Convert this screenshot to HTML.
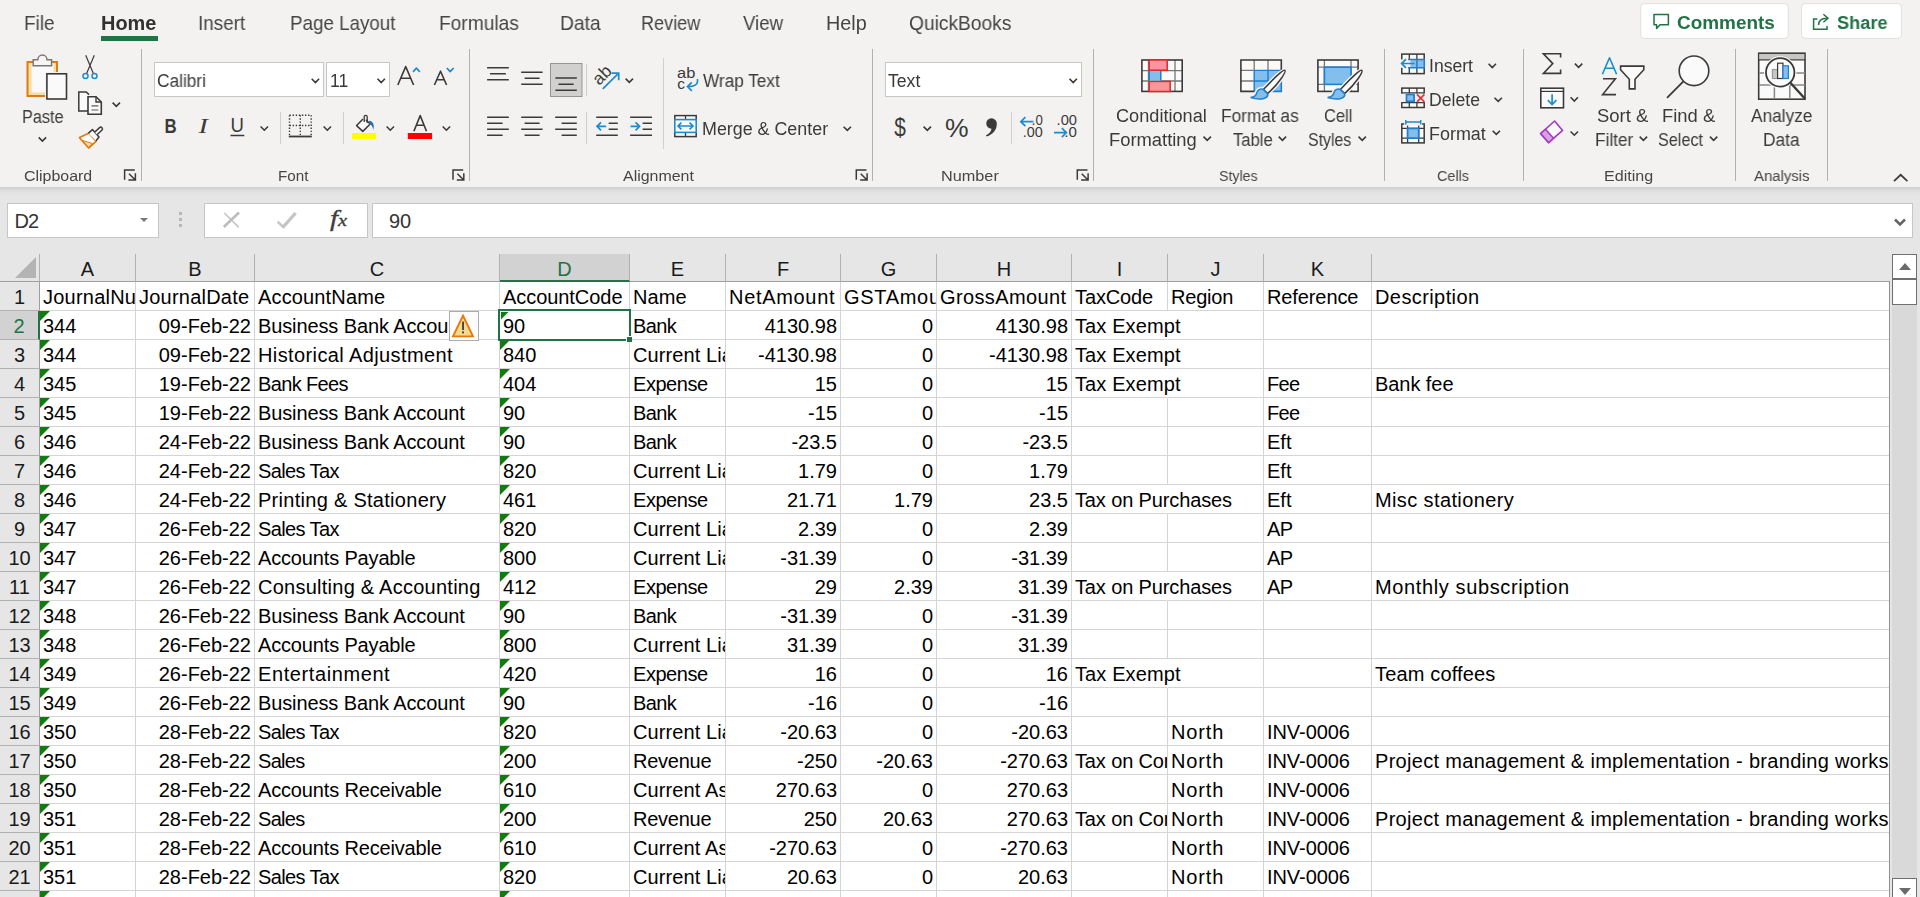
<!DOCTYPE html>
<html><head><meta charset="utf-8"><title>Excel</title>
<style>
*{box-sizing:border-box;margin:0;padding:0}
html,body{width:1920px;height:897px;overflow:hidden;background:#e6e6e6;font-family:"Liberation Sans",sans-serif;color:#000}
.abs,.abs>*{position:absolute}
#ribbon{position:absolute;left:0;top:0;width:1920px;height:187px;background:#f3f2f1}
#shadow{position:absolute;left:0;top:187px;width:1920px;height:9px;background:linear-gradient(#cfcfcf,#e0e0e0 50%,#e6e6e6)}
.tab{position:absolute;top:11px;font-size:19px;color:#3b3a39;white-space:nowrap;line-height:24px}
.rt{position:absolute;display:inline-block;white-space:nowrap;line-height:24px;transform-origin:0 0;will-change:transform}
.lbl{position:absolute;font-size:18px;color:#3b3a39;white-space:nowrap;line-height:22px}
.glbl{position:absolute;font-size:15.5px;color:#484644;white-space:nowrap;line-height:18px;top:166px}
.sep{position:absolute;top:49px;width:1px;height:132px;background:#b3b0ad}
.ssep{position:absolute;width:1px;background:#d2d0ce}
svg{position:absolute;overflow:visible}
.chev{position:absolute;width:10px;height:6px}
.box{position:absolute;background:#fff;border:1px solid #c8c6c4}
/* formula bar */
#fbar{position:absolute;left:0;top:196px;width:1920px;height:58px;background:#e6e6e6}
/* grid */
#grid{position:absolute;left:0;top:254px;width:1889px;height:643px;background:#fff;overflow:hidden}
.ch{position:absolute;top:0;height:28px;background:#e6e6e6;border-right:1px solid #b1b1b1;border-bottom:1px solid #9e9e9e;text-align:center;font-size:20px;line-height:29px;padding-top:1px;color:#1a1a1a}
.rh{position:absolute;left:0;width:40px;height:29px;background:#e6e6e6;border-right:1px solid #9e9e9e;border-bottom:1px solid #b1b1b1;text-align:center;font-size:20px;line-height:29px;padding-top:1px;color:#1a1a1a}
.c{position:absolute;height:29px;border-right:1px solid #d4d4d4;border-bottom:1px solid #d4d4d4;font-size:20px;line-height:29px;padding:1px 3px 0 3px;white-space:nowrap;overflow:hidden}
.c.r{text-align:right}
.c.o{overflow:visible;border-right-color:transparent}
.c.t:before{content:"";position:absolute;left:0;top:0;width:10px;height:10px;background:#107c10;clip-path:polygon(0 0,100% 0,0 100%)}
</style></head><body>
<style>
.ch.sel{background:#d2d2d2;color:#217346;border-bottom:2px solid #217346}
.rh.sel{background:#d2d2d2;color:#217346;border-right:2px solid #217346}
.warn{position:absolute;left:449px;top:57px;width:30px;height:30px;background:#fdfdfd;border:1px solid #ababab}
.c.t.s2:before{left:1px;top:1px;width:7.5px;height:7.5px}
.selbox{position:absolute;left:498px;top:55px;width:133px;height:32px;border:2px solid #217346}
.selh{position:absolute;left:626px;top:82px;width:5px;height:5px;background:#217346;border:1px solid #fff;box-sizing:content-box;border-right:0;border-bottom:0}
/* scrollbar */
#vs{position:absolute;left:1889px;top:254px;width:31px;height:643px;background:#e6e6e6}
#vs .track{position:absolute;left:3px;top:0;width:25px;height:643px;background:#d9d9d9}
#vs .btn{position:absolute;left:3px;width:25px;background:#fff;border:1px solid #707070}
</style>
<div id="ribbon">
<div style="position:absolute;left:101px;top:36.2px;width:56.7px;height:4.6px;background:#217346"></div>
<div class="box" style="left:153.5px;top:62px;width:170.5px;height:35px"></div>
<div class="box" style="left:326px;top:62px;width:64px;height:35px"></div>
<div class="box" style="left:885px;top:62px;width:197px;height:35px"></div>
<div class="sep" style="left:141px"></div>
<div class="sep" style="left:469px"></div>
<div class="sep" style="left:872px"></div>
<div class="sep" style="left:1093px"></div>
<div class="sep" style="left:1384px"></div>
<div class="sep" style="left:1523px"></div>
<div class="sep" style="left:1735px"></div>
<div class="sep" style="left:1827px"></div>
<div class="ssep" style="left:663px;top:58px;height:91px"></div>
<div class="ssep" style="left:280px;top:112px;height:32px"></div>
<div class="ssep" style="left:343px;top:112px;height:32px"></div>
<div class="ssep" style="left:586px;top:112px;height:32px"></div>
<div class="ssep" style="left:1011px;top:112px;height:32px"></div>
<div class="ssep" style="left:586px;top:64px;height:32px"></div>
<svg width="1920" height="187" viewBox="0 0 1920 187" style="left:0;top:0">
<!-- Clipboard group -->
<g fill="none" stroke-linecap="butt">
<!-- paste -->
<rect x="27.5" y="62" width="29.5" height="34" fill="#fbdca3" stroke="#de7b12" stroke-width="2"/>
<rect x="31.5" y="63" width="22" height="29.5" fill="#fafafa"/>
<path d="M33.2 65.8V59.7H37.8A4.6 4.6 0 0 1 47 59.7H51.6V65.8Z" fill="#f6f5f4" stroke="#797775" stroke-width="1.5"/>
<rect x="45" y="72" width="23.2" height="28.8" fill="#f3f2f1"/>
<rect x="46.9" y="73.8" width="19.6" height="25.2" fill="#fafafa" stroke="#3b3a39" stroke-width="1.6"/>
<!-- scissors -->
<path d="M94.3 55.3L86.6 73.6M85.7 55.3L93.4 73.6" stroke="#3b3a39" stroke-width="1.2"/>
<circle cx="85.5" cy="76" r="2.5" stroke="#1e8bcd" stroke-width="1.5"/>
<circle cx="94.5" cy="76" r="2.5" stroke="#1e8bcd" stroke-width="1.5"/>
<!-- copy -->
<path d="M88 111H78.8V91.9H86.2L89 94.6" stroke="#3b3a39" stroke-width="1.5" fill="#fafafa"/>
<path d="M88 96.7H96L101.3 102V114.2H88Z" fill="#fafafa" stroke="#3b3a39" stroke-width="1.6"/>
<path d="M96 96.7V102H101.3" stroke="#3b3a39" stroke-width="1.4"/>
<path d="M91.4 105.9H98.4M91.4 110H98.4" stroke="#605e5c" stroke-width="1.2"/>
<!-- format painter -->
<path d="M79.5 137.6L88.6 133.2L96.2 141.2L88.6 148L79.5 137.6Z" fill="#fff" stroke="#de7b12" stroke-width="1.7" stroke-linejoin="round"/>
<path d="M82.5 140.5L92.5 143.5L88.6 147.2Z" fill="#fbdca3" stroke="#de7b12" stroke-width="1"/>
<path d="M88.3 133.4L92.4 129.6L99 137L96 140.8" fill="#fafafa" stroke="#3b3a39" stroke-width="1.5" stroke-linejoin="round"/>
<path d="M94.6 132.2L99.6 127.6A1.7 1.7 0 0 1 102 130L97 134.8" fill="#fafafa" stroke="#3b3a39" stroke-width="1.5"/>
</g>

<!-- Font group -->
<g fill="none" stroke="#3b3a39" stroke-width="1.6" stroke-linejoin="round">
<path d="M397.8 85L405.7 66.6L413.6 85M400.6 78.3H410.8"/>
<path d="M413 71.8L416.4 68.2L419.8 71.8" stroke="#1e8bcd" stroke-width="1.7"/>
<path d="M434.4 85L440.5 71.2L446.6 85M436.6 79.8H444.4"/>
<path d="M446.8 68L450.2 71.6L453.6 68" stroke="#1e8bcd" stroke-width="1.7"/>
<path d="M230.5 135.5H244.3" stroke-width="1.5"/>
<!-- borders -->
<g stroke-width="1.4" stroke-dasharray="1.4 1.7">
<path d="M289.5 115.2H311.2M289.5 125.5H311.2M289.5 115.2V135M300.3 115.2V135M311.2 115.2V135"/>
</g>
<path d="M288.8 136.5H311.8" stroke-width="1.8"/>
<!-- fill bucket -->
<path d="M363 119L356.6 125.6L362.8 131.4L370.2 124L365.8 119.8" stroke-width="1.5" fill="#fafafa" stroke-linejoin="round"/>
<path d="M364.2 122V116.8A1.5 1.5 0 0 1 367.2 116.8V123" stroke-width="1.3"/>
<path d="M369 120.8C372.6 121 375 124.6 373.2 130C372.8 126.6 371.6 124.6 369.4 123.4Z" fill="#1e6fb8" stroke="none"/>
<!-- font color A -->
<path d="M413.9 131.3L420.2 115.6L426.5 131.3M416.2 125.3H424.2"/>
</g>
<rect x="352" y="133" width="24.3" height="6" fill="#ffff00"/>
<rect x="407.8" y="133" width="24.3" height="6" fill="#ff0000"/>
<g fill="#3b3a39" font-family="Liberation Sans, sans-serif">
<text x="164.4" y="132.6" font-size="20" font-weight="bold" textLength="12.2" lengthAdjust="spacingAndGlyphs">B</text>
<text x="198.6" y="132.6" font-size="21.5" font-style="italic" font-family="Liberation Serif, serif" textLength="9.4" lengthAdjust="spacingAndGlyphs">I</text>
<text x="230.6" y="132.3" font-size="19.5" textLength="13.4" lengthAdjust="spacingAndGlyphs">U</text>
</g>
<!-- Alignment group -->
<rect x="550.5" y="63.5" width="31.5" height="33" fill="#d2d0ce" stroke="#979593" stroke-width="1"/>
<g fill="none" stroke="#3b3a39" stroke-width="1.6">
<path d="M487.1 67.7H508.8M490 73.8H505.9M487.1 79.8H508.8"/>
<path d="M521.2 72.2H542.6M524.6 78.2H539.6M521.2 84.2H542.6"/>
<path d="M555.4 78H576.8M558.5 84.2H573.7M555.4 90.2H576.8"/>
<path d="M487.1 117.2H508.8M487.1 123.3H502.6M487.1 129.3H508.8M487.1 135.3H502.6"/>
<path d="M521.2 117.2H542.6M524.6 123.3H539.6M521.2 129.3H542.6M524.6 135.3H539.6"/>
<path d="M555.2 117.2H576.8M561.6 123.3H576.8M555.2 129.3H576.8M561.6 135.3H576.8"/>
<path d="M596.2 117.2H617.8M608.7 123.3H617.8M608.7 129.3H617.8M596.2 135.3H617.8"/>
<path d="M630.1 117.2H652M642.6 123.3H652M642.6 129.3H652M630.1 135.3H652"/>
<g stroke="#1e8bcd" stroke-width="1.7">
<path d="M597.2 126.3H606.2M601 122.3L597 126.3L601 130.3"/>
<path d="M630.5 126.3H639.5M635.6 122.3L639.6 126.3L635.6 130.3"/>
<path d="M602.8 88.9L618.2 73.7M611.6 73.2H618.7V80.3"/>
<path d="M697.4 79C698.4 84.6 694.6 86.6 687.8 86.6M691.8 82.3L687.5 86.6L691.8 90.9"/>
</g>
<!-- merge -->
<rect x="674.8" y="115.6" width="21.4" height="21" fill="#fafafa" stroke-width="1.5"/>
<path d="M685.5 115.6V137" stroke-width="1.3"/>
<rect x="674.8" y="119.6" width="21.4" height="12.8" fill="#fafafa" stroke="#1e8bcd" stroke-width="1.6"/>
<path d="M678 126H693M681.4 122.6L678 126L681.4 129.4M689.6 122.6L693 126L689.6 129.4" stroke="#1e8bcd" stroke-width="1.6"/>
</g>
<g fill="#3b3a39" font-family="Liberation Sans, sans-serif">
<text transform="translate(599.2,86) rotate(-45)" font-size="17.5">ab</text>
<text x="677" y="77.8" font-size="15.5" textLength="18.3" lengthAdjust="spacingAndGlyphs">ab</text>
<text x="677.2" y="89.3" font-size="15.5">c</text>
<!-- Number group -->
<text transform="translate(894.2,135.6) scale(1,1.32)" font-size="20" textLength="11.6" lengthAdjust="spacingAndGlyphs">$</text>
<text x="945" y="136.8" font-size="26.5" textLength="23.6" lengthAdjust="spacingAndGlyphs">%</text>
<path d="M991.4 118.3A5.2 5.2 0 0 1 996.8 123.9C996.8 129.8 992.8 134.4 986.6 136.6L986 135.3C989.2 133.7 991.2 131.5 991.5 128.7A5.2 5.2 0 0 1 991.4 118.3Z"/>
<text x="1035.6" y="125.1" font-size="14.3" textLength="7.4" lengthAdjust="spacingAndGlyphs">0</text>
<text x="1031.4" y="125.1" font-size="14.3">.</text>
<text x="1022.8" y="137.4" font-size="14.3" textLength="20" lengthAdjust="spacingAndGlyphs">.00</text>
<text x="1056.6" y="125.1" font-size="14.3" textLength="20.4" lengthAdjust="spacingAndGlyphs">.00</text>
<text x="1064.2" y="137.4" font-size="14.3" textLength="12.6" lengthAdjust="spacingAndGlyphs">.0</text>
</g>
<g fill="none" stroke="#1e8bcd" stroke-width="1.7">
<path d="M1020.8 121.7H1033.4M1025.4 117.2L1020.8 121.7L1025.4 126.2"/>
<path d="M1054 132.6H1066.4M1061.8 128.1L1066.4 132.6L1061.8 137.1"/>
</g>

<!-- Styles group -->
<g fill="none" stroke="#3b3a39" stroke-width="1.6">
<!-- conditional formatting -->
<rect x="1141.9" y="60" width="40.3" height="31.4" fill="#fafafa" stroke="none"/>
<path d="M1148.5 60V91.4M1175 60V91.4M1142 70.6H1182M1142 81H1182" stroke="#797775" stroke-width="1.3"/>
<rect x="1141.9" y="60" width="40.3" height="31.4"/>
<rect x="1149.2" y="60" width="18" height="10.2" fill="#f8959d" stroke="#d92c2c" stroke-width="1.5"/>
<rect x="1149.2" y="81.4" width="21" height="10.1" fill="#f8959d" stroke="#d92c2c" stroke-width="1.5"/>
<rect x="1149.2" y="71" width="11.6" height="9.6" fill="#83beec" stroke="none"/>
<path d="M1149.2 71V80.6M1160.8 71V80.6" stroke="#1e7fd0" stroke-width="1.5"/>
<!-- format as table -->
<rect x="1240.9" y="60" width="40.4" height="31.4" fill="#fafafa" stroke="none"/>
<rect x="1254.2" y="70.4" width="27.1" height="21" fill="#83beec" stroke="none"/>
<path d="M1254.2 60V70.4M1268 60V70.4M1241 70.4H1254.2M1241 81H1254.2" stroke="#797775" stroke-width="1.3"/>
<path d="M1254.2 70.4V91.4M1268 70.4V91.4M1254.2 70.4H1281.3M1254.2 81H1281.3" stroke="#1e7fd0" stroke-width="1.4"/>
<path d="M1254.2 91.4H1240.9V60H1281.3V70.4"/>
<path d="M1281.3 70.4V91.4H1254.2" stroke="#1e7fd0"/>
<g>
<path d="M1284.9 70.3C1286.2 71.6 1280 82.4 1267.6 93.6L1263.4 89.6C1274 78 1283.6 69.2 1284.9 70.3Z" stroke="#f3f2f1" stroke-width="4.5"/>
<path d="M1263.4 89.6L1267.6 93.6C1268.8 97.8 1262 101 1250.6 97.6C1255.4 97 1256.4 95 1257 92.4C1257.8 89.4 1261 88.4 1263.4 89.6Z" stroke="#f3f2f1" stroke-width="4.5"/>
<path d="M1284.9 70.3C1286.2 71.6 1280 82.4 1267.6 93.6L1263.4 89.6C1274 78 1283.6 69.2 1284.9 70.3Z" fill="#fafafa" stroke-width="1.5"/>
<path d="M1263.4 89.6L1267.6 93.6C1268.8 97.8 1262 101 1250.6 97.6C1255.4 97 1256.4 95 1257 92.4C1257.8 89.4 1261 88.4 1263.4 89.6Z" fill="#83beec" stroke="#1e7fd0" stroke-width="1.5"/>
</g>
<!-- cell styles -->
<rect x="1317.9" y="60" width="40.2" height="31.4" fill="#fafafa" stroke="none"/>
<path d="M1324.4 60V91.4M1351 60V91.4M1318 67.2H1358M1318 84.4H1358" stroke="#797775" stroke-width="1.3"/>
<rect x="1317.9" y="60" width="40.2" height="31.4"/>
<rect x="1324.4" y="67.2" width="26.6" height="17.2" fill="#83beec" stroke="#1e7fd0" stroke-width="1.6"/>
<g transform="translate(77,0)">
<path d="M1284.9 70.3C1286.2 71.6 1280 82.4 1267.6 93.6L1263.4 89.6C1274 78 1283.6 69.2 1284.9 70.3Z" stroke="#f3f2f1" stroke-width="4.5"/>
<path d="M1263.4 89.6L1267.6 93.6C1268.8 97.8 1262 101 1250.6 97.6C1255.4 97 1256.4 95 1257 92.4C1257.8 89.4 1261 88.4 1263.4 89.6Z" stroke="#f3f2f1" stroke-width="4.5"/>
<path d="M1284.9 70.3C1286.2 71.6 1280 82.4 1267.6 93.6L1263.4 89.6C1274 78 1283.6 69.2 1284.9 70.3Z" fill="#fafafa" stroke-width="1.5"/>
<path d="M1263.4 89.6L1267.6 93.6C1268.8 97.8 1262 101 1250.6 97.6C1255.4 97 1256.4 95 1257 92.4C1257.8 89.4 1261 88.4 1263.4 89.6Z" fill="#83beec" stroke="#1e7fd0" stroke-width="1.5"/>
</g>
</g>
<!-- Cells group -->
<g fill="none" stroke="#3b3a39" stroke-width="1.5">
<!-- insert -->
<rect x="1401.8" y="54.1" width="22.4" height="19.5" fill="#fafafa"/>
<path d="M1409.3 54.1V73.6M1416.9 54.1V73.6" stroke-width="1.3"/>
<rect x="1400" y="59.4" width="10.4" height="8.4" fill="#f3f2f1" stroke="none"/>
<rect x="1410.4" y="59.4" width="14.6" height="8.4" fill="#83beec" stroke="none"/>
<path d="M1408 59.4H1425M1408 67.8H1425M1416.9 59.4V67.8M1424.3 59.4V67.8" stroke="#1e7fd0" stroke-width="1.5"/>
<path d="M1401.6 63.5H1414.6M1406 59.2L1401.6 63.5L1406 67.8" stroke="#1e8bcd" stroke-width="1.7"/>
<!-- delete -->
<rect x="1401.8" y="88.1" width="22.4" height="19.4" fill="#fafafa"/>
<path d="M1409.3 88.1V107.5M1416.9 88.1V107.5" stroke-width="1.3"/>
<rect x="1400" y="93.5" width="26" height="8.6" fill="#f3f2f1" stroke="none"/>
<path d="M1401.8 92.8H1424.2M1401.8 102.6H1424.2" stroke-width="1.3"/>
<rect x="1406.5" y="94.5" width="7.6" height="6.8" fill="#83beec" stroke="#1e7fd0" stroke-width="1.7"/>
<path d="M1417 94.4L1424.4 101.8M1424.4 94.4L1417 101.8" stroke="#e8323a" stroke-width="1.7"/>
<!-- format -->
<rect x="1401.8" y="124" width="22.4" height="18.9" fill="#fafafa"/>
<path d="M1407.6 124V142.9M1418.7 124V142.9M1401.8 128.4H1424.2M1401.8 138.1H1424.2" stroke-width="1.3"/>
<rect x="1404.2" y="119.4" width="18" height="6.2" fill="#f3f2f1" stroke="none"/>
<rect x="1407.6" y="128.4" width="11.1" height="9.7" fill="#83beec" stroke="#1e7fd0" stroke-width="1.7"/>
<path d="M1405.8 122.1H1420.7M1405.8 119.9V124.4M1420.7 119.9V124.4" stroke="#1e8bcd" stroke-width="1.5"/>
</g>
<!-- Editing group -->
<g fill="none" stroke="#3b3a39" stroke-width="1.6">
<path d="M1560.6 57.6V53.8H1543.4L1552.8 63.6L1543.4 73.4H1560.6V69.6"/>
<rect x="1540.8" y="88.2" width="22.7" height="19.6" fill="#fafafa"/>
<path d="M1540.8 91.4H1563.5" stroke-width="1.2"/>
<path d="M1552.1 94.2V104.4M1547.8 100.2L1552.1 104.6L1556.4 100.2" stroke="#1e8bcd" stroke-width="1.7"/>
<path d="M1554.6 121L1562.6 130.4L1548.6 142.6L1540.6 133.6Z" fill="#fafafa" stroke="#a33bc2" stroke-width="1.6" stroke-linejoin="round"/>
<path d="M1545.5 129.2L1553.5 138.3L1548.6 142.6L1540.6 133.6Z" fill="#d9a0e6" stroke="#a33bc2" stroke-width="1.5" stroke-linejoin="round"/>
<path d="M1602.4 74.2L1609.5 57.8L1616.6 74.2M1605 68.3H1614" stroke="#1e8bcd" stroke-linejoin="round"/>
<path d="M1603 78.8H1615.4L1602.6 94.6H1616"/>
<path d="M1620.6 66.1H1643.8V69.8L1635 79.2V88.9H1629.3V79.2L1620.6 69.8Z" fill="#fafafa"/>
<circle cx="1694" cy="70.8" r="14.8" fill="#fafafa"/>
<path d="M1683.4 81.4L1667 97.8" stroke-width="1.8"/>
</g>
<!-- Analyze data -->
<g fill="none" stroke="#3b3a39" stroke-width="1.6">
<rect x="1758.7" y="53.2" width="46.3" height="46" fill="#fafafa"/>
<rect x="1759.5" y="54" width="44.7" height="5.4" fill="#c8c6c4" stroke="none"/>
<path d="M1758.7 59.8H1805" stroke-width="1.3"/>
<path d="M1774.4 60V99M1789.8 60V99M1759 73H1805M1759 84.9H1805" stroke="#8a8886" stroke-width="1.5"/>
<circle cx="1780.2" cy="72.4" r="16.2" fill="#fafafa" stroke="none"/>
<circle cx="1780.2" cy="72.4" r="14.2" fill="#fafafa" stroke-width="1.8"/>
<rect x="1772.4" y="69.6" width="5.2" height="8.9" fill="#c8c6c4" stroke="#979593" stroke-width="1.1"/>
<rect x="1777.6" y="63.2" width="5.4" height="15.3" fill="#fafafa" stroke-width="1.2"/>
<rect x="1783" y="65.8" width="5.4" height="12.7" fill="#83beec" stroke="#1e7fd0" stroke-width="1.2"/>
<path d="M1790.4 82.8L1805 98.8" stroke-width="2.4"/>
</g>
<!-- collapse ribbon -->
<path d="M1894 181.2L1900.7 174.8L1907.4 181.2" fill="none" stroke="#3b3a39" stroke-width="1.7"/>
<!-- Comments / Share -->
<rect x="1640.7" y="3.6" width="147.6" height="34.8" rx="3.5" fill="#fff" stroke="#e1dfdd"/>
<rect x="1801.6" y="3.6" width="99.8" height="34.8" rx="3.5" fill="#fff" stroke="#e1dfdd"/>
<path d="M1654 14.4H1668.4V24.8H1660L1656.6 28.4V24.8H1654Z" fill="none" stroke="#217346" stroke-width="1.5" stroke-linejoin="round"/>
<path d="M1817.4 19H1813.6V29.2H1827V26M1818.6 25C1818.6 20.4 1821.4 18.2 1826.6 18.2M1823.4 14.2L1828 18.2L1823.4 22.2" fill="none" stroke="#217346" stroke-width="1.5"/>

<path d="M38.7 137.4L42.4 141.1L46.1 137.4M112.6 102.6L116.3 106.3L120.0 102.6M311.7 78.8L315.4 82.5L319.1 78.8M377.5 78.8L381.2 82.5L384.9 78.8M260.6 126.5L264.3 130.2L268.0 126.5M323.6 126.5L327.3 130.2L331.0 126.5M386.6 126.5L390.3 130.2L394.0 126.5M442.7 126.5L446.4 130.2L450.1 126.5M625.6 78.6L629.3 82.3L633.0 78.6M843.6 126.7L847.3 130.4L851.0 126.7M1069.5 78.8L1073.2 82.5L1076.9 78.8M923.6 126.6L927.3 130.3L931.0 126.6M1203.5 136.6L1207.2 140.3L1210.9 136.6M1278.7 136.6L1282.4 140.3L1286.1 136.6M1358.5 136.6L1362.2 140.3L1365.9 136.6M1488.6 63.8L1492.3 67.5L1496.0 63.8M1494.5 97.7L1498.2 101.4L1501.9 97.7M1492.6 130.7L1496.3 134.4L1500.0 130.7M1574.9 63.6L1578.6 67.3L1582.3 63.6M1570.6 97.3L1574.3 101.0L1578.0 97.3M1570.6 131.5L1574.3 135.2L1578.0 131.5M1639.7 136.6L1643.4 140.3L1647.1 136.6M1709.9 136.6L1713.6 140.3L1717.3 136.6" fill="none" stroke="#3b3a39" stroke-width="1.6"/>
<path d="M124.6 179.8V170H134.8M129.0 173.8L135.4 180M135.4 173.2V180.1H128.4" fill="none" stroke="#3b3a39" stroke-width="1.5"/>
<path d="M453.0 179.8V170H463.2M457.4 173.8L463.8 180M463.8 173.2V180.1H456.8" fill="none" stroke="#3b3a39" stroke-width="1.5"/>
<path d="M856.3 179.8V170H866.5M860.7 173.8L867.1 180M867.1 173.2V180.1H860.1" fill="none" stroke="#3b3a39" stroke-width="1.5"/>
<path d="M1077.3 179.8V170H1087.5M1081.7 173.8L1088.1 180M1088.1 173.2V180.1H1081.1" fill="none" stroke="#3b3a39" stroke-width="1.5"/>
</svg>
<span class="rt" style="left:24.34px;top:11.36px;font-size:19.8px;font-weight:normal;color:#444;transform:scaleX(0.9620)">File</span>
<span class="rt" style="left:197.75px;top:11.36px;font-size:19.8px;font-weight:normal;color:#444;transform:scaleX(0.9515)">Insert</span>
<span class="rt" style="left:289.75px;top:11.36px;font-size:19.8px;font-weight:normal;color:#444;transform:scaleX(0.9495)">Page Layout</span>
<span class="rt" style="left:439.03px;top:11.36px;font-size:19.8px;font-weight:normal;color:#444;transform:scaleX(0.9688)">Formulas</span>
<span class="rt" style="left:560.03px;top:11.36px;font-size:19.8px;font-weight:normal;color:#444;transform:scaleX(0.9735)">Data</span>
<span class="rt" style="left:640.79px;top:11.36px;font-size:19.8px;font-weight:normal;color:#444;transform:scaleX(0.9137)">Review</span>
<span class="rt" style="left:743.30px;top:11.36px;font-size:19.8px;font-weight:normal;color:#444;transform:scaleX(0.9414)">View</span>
<span class="rt" style="left:825.71px;top:11.36px;font-size:19.8px;font-weight:normal;color:#444;transform:scaleX(0.9904)">Help</span>
<span class="rt" style="left:909.30px;top:11.36px;font-size:19.8px;font-weight:normal;color:#444;transform:scaleX(0.9692)">QuickBooks</span>
<span class="rt" style="left:100.69px;top:11.36px;font-size:19.8px;font-weight:bold;color:#323130;transform:scaleX(1.0064)">Home</span>
<span class="rt" style="left:22.08px;top:104.78px;font-size:17.6px;font-weight:normal;color:#3b3a39;transform:scaleX(0.9235)">Paste</span>
<span class="rt" style="left:157.40px;top:68.88px;font-size:17.6px;font-weight:normal;color:#3b3a39;transform:scaleX(0.9826)">Calibri</span>
<span class="rt" style="left:329.50px;top:68.88px;font-size:17.6px;font-weight:normal;color:#3b3a39;transform:scaleX(1.0013)">11</span>
<span class="rt" style="left:702.60px;top:68.98px;font-size:17.6px;font-weight:normal;color:#3b3a39;transform:scaleX(0.9774)">Wrap Text</span>
<span class="rt" style="left:701.78px;top:116.88px;font-size:17.6px;font-weight:normal;color:#3b3a39;transform:scaleX(1.0152)">Merge &amp; Center</span>
<span class="rt" style="left:888.00px;top:68.88px;font-size:17.6px;font-weight:normal;color:#3b3a39;transform:scaleX(0.9945)">Text</span>
<span class="rt" style="left:1116.40px;top:104.18px;font-size:17.6px;font-weight:normal;color:#3b3a39;transform:scaleX(1.0319)">Conditional</span>
<span class="rt" style="left:1108.66px;top:127.78px;font-size:17.6px;font-weight:normal;color:#3b3a39;transform:scaleX(1.0437)">Formatting</span>
<span class="rt" style="left:1221.12px;top:104.18px;font-size:17.6px;font-weight:normal;color:#3b3a39;transform:scaleX(0.9810)">Format as</span>
<span class="rt" style="left:1232.80px;top:127.78px;font-size:17.6px;font-weight:normal;color:#3b3a39;transform:scaleX(0.9473)">Table</span>
<span class="rt" style="left:1324.40px;top:104.18px;font-size:17.6px;font-weight:normal;color:#3b3a39;transform:scaleX(0.9354)">Cell</span>
<span class="rt" style="left:1307.70px;top:127.78px;font-size:17.6px;font-weight:normal;color:#3b3a39;transform:scaleX(0.9041)">Styles</span>
<span class="rt" style="left:1429.10px;top:53.98px;font-size:17.6px;font-weight:normal;color:#3b3a39;transform:scaleX(0.9997)">Insert</span>
<span class="rt" style="left:1429.10px;top:88.08px;font-size:17.6px;font-weight:normal;color:#3b3a39;transform:scaleX(1.0026)">Delete</span>
<span class="rt" style="left:1429.08px;top:121.88px;font-size:17.6px;font-weight:normal;color:#3b3a39;transform:scaleX(1.0195)">Format</span>
<span class="rt" style="left:1597.40px;top:104.38px;font-size:17.6px;font-weight:normal;color:#3b3a39;transform:scaleX(1.0497)">Sort &amp;</span>
<span class="rt" style="left:1594.92px;top:128.18px;font-size:17.6px;font-weight:normal;color:#3b3a39;transform:scaleX(0.9781)">Filter</span>
<span class="rt" style="left:1661.65px;top:104.38px;font-size:17.6px;font-weight:normal;color:#3b3a39;transform:scaleX(1.0456)">Find &amp;</span>
<span class="rt" style="left:1657.80px;top:128.18px;font-size:17.6px;font-weight:normal;color:#3b3a39;transform:scaleX(0.9202)">Select</span>
<span class="rt" style="left:1751.40px;top:104.38px;font-size:17.6px;font-weight:normal;color:#3b3a39;transform:scaleX(0.9821)">Analyze</span>
<span class="rt" style="left:1762.72px;top:128.18px;font-size:17.6px;font-weight:normal;color:#3b3a39;transform:scaleX(0.9813)">Data</span>
<span class="rt" style="left:1676.80px;top:10.99px;font-size:18.8px;font-weight:bold;color:#217346;transform:scaleX(1.0082)">Comments</span>
<span class="rt" style="left:1837.30px;top:10.99px;font-size:18.8px;font-weight:bold;color:#217346;transform:scaleX(0.9681)">Share</span>
<span class="rt" style="left:24.00px;top:163.78px;font-size:15.2px;font-weight:normal;color:#484644;transform:scaleX(1.0486)">Clipboard</span>
<span class="rt" style="left:277.70px;top:163.78px;font-size:15.2px;font-weight:normal;color:#484644;transform:scaleX(1.0043)">Font</span>
<span class="rt" style="left:623.30px;top:163.78px;font-size:15.2px;font-weight:normal;color:#484644;transform:scaleX(1.0495)">Alignment</span>
<span class="rt" style="left:941.23px;top:163.78px;font-size:15.2px;font-weight:normal;color:#484644;transform:scaleX(1.0706)">Number</span>
<span class="rt" style="left:1219.40px;top:163.78px;font-size:15.2px;font-weight:normal;color:#484644;transform:scaleX(0.9338)">Styles</span>
<span class="rt" style="left:1437.40px;top:163.78px;font-size:15.2px;font-weight:normal;color:#484644;transform:scaleX(0.9455)">Cells</span>
<span class="rt" style="left:1604.34px;top:163.78px;font-size:15.2px;font-weight:normal;color:#484644;transform:scaleX(1.0602)">Editing</span>
<span class="rt" style="left:1753.50px;top:163.78px;font-size:15.2px;font-weight:normal;color:#484644;transform:scaleX(0.9814)">Analysis</span>
</div>
<div id="shadow"></div>
<div id="fbar">
 <div class="box" style="left:7px;top:7px;width:152px;height:35px;border-color:#c6c6c6"></div>
 <div style="position:absolute;left:14.5px;top:14px;font-size:20px;line-height:22px;color:#333;letter-spacing:-1px">D2</div>
 <svg width="8" height="4" style="left:140px;top:22px"><path d="M0 0H8L4 4Z" fill="#777"/></svg>
 <div style="position:absolute;left:179px;top:16px;width:3px;height:3px;background:#b8b8b8;box-shadow:0 6px 0 #b8b8b8,0 12px 0 #b8b8b8"></div>
 <div class="box" style="left:204px;top:7px;width:164px;height:35px;border-color:#c6c6c6"></div>
 <svg width="18" height="18" style="left:222px;top:15px"><path d="M2.4 2L16.8 16.4" stroke="#c4c4c4" stroke-width="1.5" fill="none"/><path d="M17 1.6L1.8 16" stroke="#bdbdbd" stroke-width="2.7" fill="none"/></svg>
 <svg width="22" height="18" style="left:276px;top:16px"><path d="M1.6 9.6L7.4 15.2" stroke="#c8c8c8" stroke-width="2.6" fill="none"/><path d="M6.6 15.6L19.6 1" stroke="#c4c4c4" stroke-width="3.2" fill="none"/></svg>
 <div style="position:absolute;left:330px;top:8px;font-family:'Liberation Serif',serif;font-style:italic;font-weight:normal;font-size:24px;line-height:28px;color:#3e3e3e;-webkit-text-stroke:0.35px #3e3e3e;transform:scaleX(1.2);transform-origin:0 0;white-space:nowrap">f<span style="font-size:17px">x</span></div>
 <div class="box" style="left:372px;top:7px;width:1541px;height:35px;border-color:#c6c6c6"></div>
 <div style="position:absolute;left:389px;top:14px;font-size:20px;line-height:22px;color:#333">90</div>
 <svg width="12" height="9" style="left:1894px;top:22px"><path d="M1 1.5L6 6.5L11 1.5" stroke="#666" stroke-width="2.6" fill="none"/></svg>
</div>
<div id="grid">
<div class="ch" style="left:0;width:40px"><svg width="21" height="21" style="left:15px;top:3px"><path d="M21 0V21H0Z" fill="#b4b4b4"/></svg></div>
<div class="ch" style="left:40px;width:96px">A</div>
<div class="ch" style="left:136px;width:119px">B</div>
<div class="ch" style="left:255px;width:245px">C</div>
<div class="ch sel" style="left:500px;width:130px">D</div>
<div class="ch" style="left:630px;width:96px">E</div>
<div class="ch" style="left:726px;width:115px">F</div>
<div class="ch" style="left:841px;width:96px">G</div>
<div class="ch" style="left:937px;width:135px">H</div>
<div class="ch" style="left:1072px;width:96px">I</div>
<div class="ch" style="left:1168px;width:96px">J</div>
<div class="ch" style="left:1264px;width:108px">K</div>
<div class="ch" style="left:1372px;width:518px"></div>
<div class="rh" style="top:28px">1</div>
<div class="c" style="left:40px;top:28px;width:96px;letter-spacing:0.228px">JournalNumber</div>
<div class="c" style="left:136px;top:28px;width:119px;letter-spacing:0.228px">JournalDate</div>
<div class="c" style="left:255px;top:28px;width:245px;letter-spacing:0.151px">AccountName</div>
<div class="c" style="left:500px;top:28px;width:130px;letter-spacing:-0.056px">AccountCode</div>
<div class="c" style="left:630px;top:28px;width:96px;letter-spacing:0.091px">Name</div>
<div class="c" style="left:726px;top:28px;width:115px;letter-spacing:0.688px">NetAmount</div>
<div class="c" style="left:841px;top:28px;width:96px;letter-spacing:0.688px">GSTAmount</div>
<div class="c" style="left:937px;top:28px;width:135px;letter-spacing:0.379px">GrossAmount</div>
<div class="c" style="left:1072px;top:28px;width:96px;letter-spacing:-0.119px">TaxCode</div>
<div class="c" style="left:1168px;top:28px;width:96px;letter-spacing:-0.191px">Region</div>
<div class="c" style="left:1264px;top:28px;width:108px;letter-spacing:-0.107px">Reference</div>
<div class="c" style="left:1372px;top:28px;width:518px;letter-spacing:0.408px">Description</div>
<div class="rh sel" style="top:57px">2</div>
<div class="c t" style="left:40px;top:57px;width:96px">344</div>
<div class="c r" style="left:136px;top:57px;width:119px">09-Feb-22</div>
<div class="c" style="left:255px;top:57px;width:245px;letter-spacing:-0.113px">Business Bank Account</div>
<div class="c t s2" style="left:500px;top:57px;width:130px">90</div>
<div class="c" style="left:630px;top:57px;width:96px;letter-spacing:-0.629px">Bank</div>
<div class="c r" style="left:726px;top:57px;width:115px">4130.98</div>
<div class="c r" style="left:841px;top:57px;width:96px">0</div>
<div class="c r" style="left:937px;top:57px;width:135px">4130.98</div>
<div class="c o" style="left:1072px;top:57px;width:96px;letter-spacing:0.119px">Tax Exempt</div>
<div class="c" style="left:1168px;top:57px;width:96px"></div>
<div class="c" style="left:1264px;top:57px;width:108px"></div>
<div class="c" style="left:1372px;top:57px;width:518px"></div>
<div class="rh" style="top:86px">3</div>
<div class="c t" style="left:40px;top:86px;width:96px">344</div>
<div class="c r" style="left:136px;top:86px;width:119px">09-Feb-22</div>
<div class="c" style="left:255px;top:86px;width:245px;letter-spacing:0.391px">Historical Adjustment</div>
<div class="c t" style="left:500px;top:86px;width:130px">840</div>
<div class="c" style="left:630px;top:86px;width:96px;letter-spacing:0.103px">Current Liability</div>
<div class="c r" style="left:726px;top:86px;width:115px">-4130.98</div>
<div class="c r" style="left:841px;top:86px;width:96px">0</div>
<div class="c r" style="left:937px;top:86px;width:135px">-4130.98</div>
<div class="c o" style="left:1072px;top:86px;width:96px;letter-spacing:0.119px">Tax Exempt</div>
<div class="c" style="left:1168px;top:86px;width:96px"></div>
<div class="c" style="left:1264px;top:86px;width:108px"></div>
<div class="c" style="left:1372px;top:86px;width:518px"></div>
<div class="rh" style="top:115px">4</div>
<div class="c t" style="left:40px;top:115px;width:96px">345</div>
<div class="c r" style="left:136px;top:115px;width:119px">19-Feb-22</div>
<div class="c" style="left:255px;top:115px;width:245px;letter-spacing:-0.626px">Bank Fees</div>
<div class="c t" style="left:500px;top:115px;width:130px">404</div>
<div class="c" style="left:630px;top:115px;width:96px;letter-spacing:-0.451px">Expense</div>
<div class="c r" style="left:726px;top:115px;width:115px">15</div>
<div class="c r" style="left:841px;top:115px;width:96px">0</div>
<div class="c r" style="left:937px;top:115px;width:135px">15</div>
<div class="c o" style="left:1072px;top:115px;width:96px;letter-spacing:0.119px">Tax Exempt</div>
<div class="c" style="left:1168px;top:115px;width:96px"></div>
<div class="c" style="left:1264px;top:115px;width:108px;letter-spacing:-0.700px">Fee</div>
<div class="c" style="left:1372px;top:115px;width:518px;letter-spacing:-0.060px">Bank fee</div>
<div class="rh" style="top:144px">5</div>
<div class="c t" style="left:40px;top:144px;width:96px">345</div>
<div class="c r" style="left:136px;top:144px;width:119px">19-Feb-22</div>
<div class="c" style="left:255px;top:144px;width:245px;letter-spacing:-0.113px">Business Bank Account</div>
<div class="c t" style="left:500px;top:144px;width:130px">90</div>
<div class="c" style="left:630px;top:144px;width:96px;letter-spacing:-0.629px">Bank</div>
<div class="c r" style="left:726px;top:144px;width:115px">-15</div>
<div class="c r" style="left:841px;top:144px;width:96px">0</div>
<div class="c r" style="left:937px;top:144px;width:135px">-15</div>
<div class="c" style="left:1072px;top:144px;width:96px"></div>
<div class="c" style="left:1168px;top:144px;width:96px"></div>
<div class="c" style="left:1264px;top:144px;width:108px;letter-spacing:-0.700px">Fee</div>
<div class="c" style="left:1372px;top:144px;width:518px"></div>
<div class="rh" style="top:173px">6</div>
<div class="c t" style="left:40px;top:173px;width:96px">346</div>
<div class="c r" style="left:136px;top:173px;width:119px">24-Feb-22</div>
<div class="c" style="left:255px;top:173px;width:245px;letter-spacing:-0.113px">Business Bank Account</div>
<div class="c t" style="left:500px;top:173px;width:130px">90</div>
<div class="c" style="left:630px;top:173px;width:96px;letter-spacing:-0.629px">Bank</div>
<div class="c r" style="left:726px;top:173px;width:115px">-23.5</div>
<div class="c r" style="left:841px;top:173px;width:96px">0</div>
<div class="c r" style="left:937px;top:173px;width:135px">-23.5</div>
<div class="c" style="left:1072px;top:173px;width:96px"></div>
<div class="c" style="left:1168px;top:173px;width:96px"></div>
<div class="c" style="left:1264px;top:173px;width:108px">Eft</div>
<div class="c" style="left:1372px;top:173px;width:518px"></div>
<div class="rh" style="top:202px">7</div>
<div class="c t" style="left:40px;top:202px;width:96px">346</div>
<div class="c r" style="left:136px;top:202px;width:119px">24-Feb-22</div>
<div class="c" style="left:255px;top:202px;width:245px;letter-spacing:-0.614px">Sales Tax</div>
<div class="c t" style="left:500px;top:202px;width:130px">820</div>
<div class="c" style="left:630px;top:202px;width:96px;letter-spacing:0.103px">Current Liability</div>
<div class="c r" style="left:726px;top:202px;width:115px">1.79</div>
<div class="c r" style="left:841px;top:202px;width:96px">0</div>
<div class="c r" style="left:937px;top:202px;width:135px">1.79</div>
<div class="c" style="left:1072px;top:202px;width:96px"></div>
<div class="c" style="left:1168px;top:202px;width:96px"></div>
<div class="c" style="left:1264px;top:202px;width:108px">Eft</div>
<div class="c" style="left:1372px;top:202px;width:518px"></div>
<div class="rh" style="top:231px">8</div>
<div class="c t" style="left:40px;top:231px;width:96px">346</div>
<div class="c r" style="left:136px;top:231px;width:119px">24-Feb-22</div>
<div class="c" style="left:255px;top:231px;width:245px;letter-spacing:0.284px">Printing &amp; Stationery</div>
<div class="c t" style="left:500px;top:231px;width:130px">461</div>
<div class="c" style="left:630px;top:231px;width:96px;letter-spacing:-0.451px">Expense</div>
<div class="c r" style="left:726px;top:231px;width:115px">21.71</div>
<div class="c r" style="left:841px;top:231px;width:96px">1.79</div>
<div class="c r" style="left:937px;top:231px;width:135px">23.5</div>
<div class="c o" style="left:1072px;top:231px;width:96px;letter-spacing:-0.132px">Tax on Purchases</div>
<div class="c" style="left:1168px;top:231px;width:96px"></div>
<div class="c" style="left:1264px;top:231px;width:108px">Eft</div>
<div class="c" style="left:1372px;top:231px;width:518px;letter-spacing:0.381px">Misc stationery</div>
<div class="rh" style="top:260px">9</div>
<div class="c t" style="left:40px;top:260px;width:96px">347</div>
<div class="c r" style="left:136px;top:260px;width:119px">26-Feb-22</div>
<div class="c" style="left:255px;top:260px;width:245px;letter-spacing:-0.614px">Sales Tax</div>
<div class="c t" style="left:500px;top:260px;width:130px">820</div>
<div class="c" style="left:630px;top:260px;width:96px;letter-spacing:0.103px">Current Liability</div>
<div class="c r" style="left:726px;top:260px;width:115px">2.39</div>
<div class="c r" style="left:841px;top:260px;width:96px">0</div>
<div class="c r" style="left:937px;top:260px;width:135px">2.39</div>
<div class="c" style="left:1072px;top:260px;width:96px"></div>
<div class="c" style="left:1168px;top:260px;width:96px"></div>
<div class="c" style="left:1264px;top:260px;width:108px;letter-spacing:-0.700px">AP</div>
<div class="c" style="left:1372px;top:260px;width:518px"></div>
<div class="rh" style="top:289px">10</div>
<div class="c t" style="left:40px;top:289px;width:96px">347</div>
<div class="c r" style="left:136px;top:289px;width:119px">26-Feb-22</div>
<div class="c" style="left:255px;top:289px;width:245px;letter-spacing:-0.158px">Accounts Payable</div>
<div class="c t" style="left:500px;top:289px;width:130px">800</div>
<div class="c" style="left:630px;top:289px;width:96px;letter-spacing:0.103px">Current Liability</div>
<div class="c r" style="left:726px;top:289px;width:115px">-31.39</div>
<div class="c r" style="left:841px;top:289px;width:96px">0</div>
<div class="c r" style="left:937px;top:289px;width:135px">-31.39</div>
<div class="c" style="left:1072px;top:289px;width:96px"></div>
<div class="c" style="left:1168px;top:289px;width:96px"></div>
<div class="c" style="left:1264px;top:289px;width:108px;letter-spacing:-0.700px">AP</div>
<div class="c" style="left:1372px;top:289px;width:518px"></div>
<div class="rh" style="top:318px">11</div>
<div class="c t" style="left:40px;top:318px;width:96px">347</div>
<div class="c r" style="left:136px;top:318px;width:119px">26-Feb-22</div>
<div class="c" style="left:255px;top:318px;width:245px;letter-spacing:0.251px">Consulting &amp; Accounting</div>
<div class="c t" style="left:500px;top:318px;width:130px">412</div>
<div class="c" style="left:630px;top:318px;width:96px;letter-spacing:-0.451px">Expense</div>
<div class="c r" style="left:726px;top:318px;width:115px">29</div>
<div class="c r" style="left:841px;top:318px;width:96px">2.39</div>
<div class="c r" style="left:937px;top:318px;width:135px">31.39</div>
<div class="c o" style="left:1072px;top:318px;width:96px;letter-spacing:-0.132px">Tax on Purchases</div>
<div class="c" style="left:1168px;top:318px;width:96px"></div>
<div class="c" style="left:1264px;top:318px;width:108px;letter-spacing:-0.700px">AP</div>
<div class="c" style="left:1372px;top:318px;width:518px;letter-spacing:0.622px">Monthly subscription</div>
<div class="rh" style="top:347px">12</div>
<div class="c t" style="left:40px;top:347px;width:96px">348</div>
<div class="c r" style="left:136px;top:347px;width:119px">26-Feb-22</div>
<div class="c" style="left:255px;top:347px;width:245px;letter-spacing:-0.113px">Business Bank Account</div>
<div class="c t" style="left:500px;top:347px;width:130px">90</div>
<div class="c" style="left:630px;top:347px;width:96px;letter-spacing:-0.629px">Bank</div>
<div class="c r" style="left:726px;top:347px;width:115px">-31.39</div>
<div class="c r" style="left:841px;top:347px;width:96px">0</div>
<div class="c r" style="left:937px;top:347px;width:135px">-31.39</div>
<div class="c" style="left:1072px;top:347px;width:96px"></div>
<div class="c" style="left:1168px;top:347px;width:96px"></div>
<div class="c" style="left:1264px;top:347px;width:108px"></div>
<div class="c" style="left:1372px;top:347px;width:518px"></div>
<div class="rh" style="top:376px">13</div>
<div class="c t" style="left:40px;top:376px;width:96px">348</div>
<div class="c r" style="left:136px;top:376px;width:119px">26-Feb-22</div>
<div class="c" style="left:255px;top:376px;width:245px;letter-spacing:-0.158px">Accounts Payable</div>
<div class="c t" style="left:500px;top:376px;width:130px">800</div>
<div class="c" style="left:630px;top:376px;width:96px;letter-spacing:0.103px">Current Liability</div>
<div class="c r" style="left:726px;top:376px;width:115px">31.39</div>
<div class="c r" style="left:841px;top:376px;width:96px">0</div>
<div class="c r" style="left:937px;top:376px;width:135px">31.39</div>
<div class="c" style="left:1072px;top:376px;width:96px"></div>
<div class="c" style="left:1168px;top:376px;width:96px"></div>
<div class="c" style="left:1264px;top:376px;width:108px"></div>
<div class="c" style="left:1372px;top:376px;width:518px"></div>
<div class="rh" style="top:405px">14</div>
<div class="c t" style="left:40px;top:405px;width:96px">349</div>
<div class="c r" style="left:136px;top:405px;width:119px">26-Feb-22</div>
<div class="c" style="left:255px;top:405px;width:245px;letter-spacing:0.595px">Entertainment</div>
<div class="c t" style="left:500px;top:405px;width:130px">420</div>
<div class="c" style="left:630px;top:405px;width:96px;letter-spacing:-0.451px">Expense</div>
<div class="c r" style="left:726px;top:405px;width:115px">16</div>
<div class="c r" style="left:841px;top:405px;width:96px">0</div>
<div class="c r" style="left:937px;top:405px;width:135px">16</div>
<div class="c o" style="left:1072px;top:405px;width:96px;letter-spacing:0.119px">Tax Exempt</div>
<div class="c" style="left:1168px;top:405px;width:96px"></div>
<div class="c" style="left:1264px;top:405px;width:108px"></div>
<div class="c" style="left:1372px;top:405px;width:518px;letter-spacing:0.156px">Team coffees</div>
<div class="rh" style="top:434px">15</div>
<div class="c t" style="left:40px;top:434px;width:96px">349</div>
<div class="c r" style="left:136px;top:434px;width:119px">26-Feb-22</div>
<div class="c" style="left:255px;top:434px;width:245px;letter-spacing:-0.113px">Business Bank Account</div>
<div class="c t" style="left:500px;top:434px;width:130px">90</div>
<div class="c" style="left:630px;top:434px;width:96px;letter-spacing:-0.629px">Bank</div>
<div class="c r" style="left:726px;top:434px;width:115px">-16</div>
<div class="c r" style="left:841px;top:434px;width:96px">0</div>
<div class="c r" style="left:937px;top:434px;width:135px">-16</div>
<div class="c" style="left:1072px;top:434px;width:96px"></div>
<div class="c" style="left:1168px;top:434px;width:96px"></div>
<div class="c" style="left:1264px;top:434px;width:108px"></div>
<div class="c" style="left:1372px;top:434px;width:518px"></div>
<div class="rh" style="top:463px">16</div>
<div class="c t" style="left:40px;top:463px;width:96px">350</div>
<div class="c r" style="left:136px;top:463px;width:119px">28-Feb-22</div>
<div class="c" style="left:255px;top:463px;width:245px;letter-spacing:-0.614px">Sales Tax</div>
<div class="c t" style="left:500px;top:463px;width:130px">820</div>
<div class="c" style="left:630px;top:463px;width:96px;letter-spacing:0.103px">Current Liability</div>
<div class="c r" style="left:726px;top:463px;width:115px">-20.63</div>
<div class="c r" style="left:841px;top:463px;width:96px">0</div>
<div class="c r" style="left:937px;top:463px;width:135px">-20.63</div>
<div class="c" style="left:1072px;top:463px;width:96px"></div>
<div class="c" style="left:1168px;top:463px;width:96px;letter-spacing:0.879px">North</div>
<div class="c" style="left:1264px;top:463px;width:108px;letter-spacing:-0.067px">INV-0006</div>
<div class="c" style="left:1372px;top:463px;width:518px"></div>
<div class="rh" style="top:492px">17</div>
<div class="c t" style="left:40px;top:492px;width:96px">350</div>
<div class="c r" style="left:136px;top:492px;width:119px">28-Feb-22</div>
<div class="c" style="left:255px;top:492px;width:245px;letter-spacing:-0.700px">Sales</div>
<div class="c t" style="left:500px;top:492px;width:130px">200</div>
<div class="c" style="left:630px;top:492px;width:96px;letter-spacing:-0.256px">Revenue</div>
<div class="c r" style="left:726px;top:492px;width:115px">-250</div>
<div class="c r" style="left:841px;top:492px;width:96px">-20.63</div>
<div class="c r" style="left:937px;top:492px;width:135px">-270.63</div>
<div class="c" style="left:1072px;top:492px;width:96px;letter-spacing:-0.132px">Tax on Consulting</div>
<div class="c" style="left:1168px;top:492px;width:96px;letter-spacing:0.879px">North</div>
<div class="c" style="left:1264px;top:492px;width:108px;letter-spacing:-0.067px">INV-0006</div>
<div class="c" style="left:1372px;top:492px;width:518px;letter-spacing:0.304px">Project management &amp; implementation - branding workshop</div>
<div class="rh" style="top:521px">18</div>
<div class="c t" style="left:40px;top:521px;width:96px">350</div>
<div class="c r" style="left:136px;top:521px;width:119px">28-Feb-22</div>
<div class="c" style="left:255px;top:521px;width:245px;letter-spacing:-0.158px">Accounts Receivable</div>
<div class="c t" style="left:500px;top:521px;width:130px">610</div>
<div class="c" style="left:630px;top:521px;width:96px;letter-spacing:0.103px">Current Asset</div>
<div class="c r" style="left:726px;top:521px;width:115px">270.63</div>
<div class="c r" style="left:841px;top:521px;width:96px">0</div>
<div class="c r" style="left:937px;top:521px;width:135px">270.63</div>
<div class="c" style="left:1072px;top:521px;width:96px"></div>
<div class="c" style="left:1168px;top:521px;width:96px;letter-spacing:0.879px">North</div>
<div class="c" style="left:1264px;top:521px;width:108px;letter-spacing:-0.067px">INV-0006</div>
<div class="c" style="left:1372px;top:521px;width:518px"></div>
<div class="rh" style="top:550px">19</div>
<div class="c t" style="left:40px;top:550px;width:96px">351</div>
<div class="c r" style="left:136px;top:550px;width:119px">28-Feb-22</div>
<div class="c" style="left:255px;top:550px;width:245px;letter-spacing:-0.700px">Sales</div>
<div class="c t" style="left:500px;top:550px;width:130px">200</div>
<div class="c" style="left:630px;top:550px;width:96px;letter-spacing:-0.256px">Revenue</div>
<div class="c r" style="left:726px;top:550px;width:115px">250</div>
<div class="c r" style="left:841px;top:550px;width:96px">20.63</div>
<div class="c r" style="left:937px;top:550px;width:135px">270.63</div>
<div class="c" style="left:1072px;top:550px;width:96px;letter-spacing:-0.132px">Tax on Consulting</div>
<div class="c" style="left:1168px;top:550px;width:96px;letter-spacing:0.879px">North</div>
<div class="c" style="left:1264px;top:550px;width:108px;letter-spacing:-0.067px">INV-0006</div>
<div class="c" style="left:1372px;top:550px;width:518px;letter-spacing:0.304px">Project management &amp; implementation - branding workshop</div>
<div class="rh" style="top:579px">20</div>
<div class="c t" style="left:40px;top:579px;width:96px">351</div>
<div class="c r" style="left:136px;top:579px;width:119px">28-Feb-22</div>
<div class="c" style="left:255px;top:579px;width:245px;letter-spacing:-0.158px">Accounts Receivable</div>
<div class="c t" style="left:500px;top:579px;width:130px">610</div>
<div class="c" style="left:630px;top:579px;width:96px;letter-spacing:0.103px">Current Asset</div>
<div class="c r" style="left:726px;top:579px;width:115px">-270.63</div>
<div class="c r" style="left:841px;top:579px;width:96px">0</div>
<div class="c r" style="left:937px;top:579px;width:135px">-270.63</div>
<div class="c" style="left:1072px;top:579px;width:96px"></div>
<div class="c" style="left:1168px;top:579px;width:96px;letter-spacing:0.879px">North</div>
<div class="c" style="left:1264px;top:579px;width:108px;letter-spacing:-0.067px">INV-0006</div>
<div class="c" style="left:1372px;top:579px;width:518px"></div>
<div class="rh" style="top:608px">21</div>
<div class="c t" style="left:40px;top:608px;width:96px">351</div>
<div class="c r" style="left:136px;top:608px;width:119px">28-Feb-22</div>
<div class="c" style="left:255px;top:608px;width:245px;letter-spacing:-0.614px">Sales Tax</div>
<div class="c t" style="left:500px;top:608px;width:130px">820</div>
<div class="c" style="left:630px;top:608px;width:96px;letter-spacing:0.103px">Current Liability</div>
<div class="c r" style="left:726px;top:608px;width:115px">20.63</div>
<div class="c r" style="left:841px;top:608px;width:96px">0</div>
<div class="c r" style="left:937px;top:608px;width:135px">20.63</div>
<div class="c" style="left:1072px;top:608px;width:96px"></div>
<div class="c" style="left:1168px;top:608px;width:96px;letter-spacing:0.879px">North</div>
<div class="c" style="left:1264px;top:608px;width:108px;letter-spacing:-0.067px">INV-0006</div>
<div class="c" style="left:1372px;top:608px;width:518px"></div>
<div class="rh" style="top:637px">22</div>
<div class="c t" style="left:40px;top:637px;width:96px"></div>
<div class="c r" style="left:136px;top:637px;width:119px"></div>
<div class="c" style="left:255px;top:637px;width:245px"></div>
<div class="c t" style="left:500px;top:637px;width:130px"></div>
<div class="c" style="left:630px;top:637px;width:96px"></div>
<div class="c r" style="left:726px;top:637px;width:115px"></div>
<div class="c r" style="left:841px;top:637px;width:96px"></div>
<div class="c r" style="left:937px;top:637px;width:135px"></div>
<div class="c" style="left:1072px;top:637px;width:96px"></div>
<div class="c" style="left:1168px;top:637px;width:96px"></div>
<div class="c" style="left:1264px;top:637px;width:108px"></div>
<div class="c" style="left:1372px;top:637px;width:518px"></div>
<div class="warn"><svg width="24" height="24" viewBox="0 0 24 24" style="left:1.3px;top:1px"><path d="M12 3.6L22 24.4H2Z" fill="#f6d98c" stroke="#e8780a" stroke-width="1.9" stroke-linejoin="miter" transform="translate(0,-1)"/><rect x="11.1" y="8.6" width="1.9" height="8.4" fill="#444"/><rect x="11.1" y="18.4" width="1.9" height="2" fill="#444"/></svg></div>
<div class="selbox"></div><div class="selh"></div>
</div>
<div id="vs"><div style="position:absolute;left:0;top:27px;width:1px;height:616px;background:#919191"></div><div class="track"></div>
<div class="btn" style="top:0;height:25px"><svg width="12" height="7" style="left:5.5px;top:8px"><path d="M0 7H12L6 0Z" fill="#6b6b6b"/></svg></div>
<div class="btn" style="top:24px;height:27px;border-top-width:2px"></div>
<div class="btn" style="top:624px;height:25px"><svg width="12" height="7" style="left:5.5px;top:9px"><path d="M0 0H12L6 7Z" fill="#6b6b6b"/></svg></div>
</div>
</body></html>
